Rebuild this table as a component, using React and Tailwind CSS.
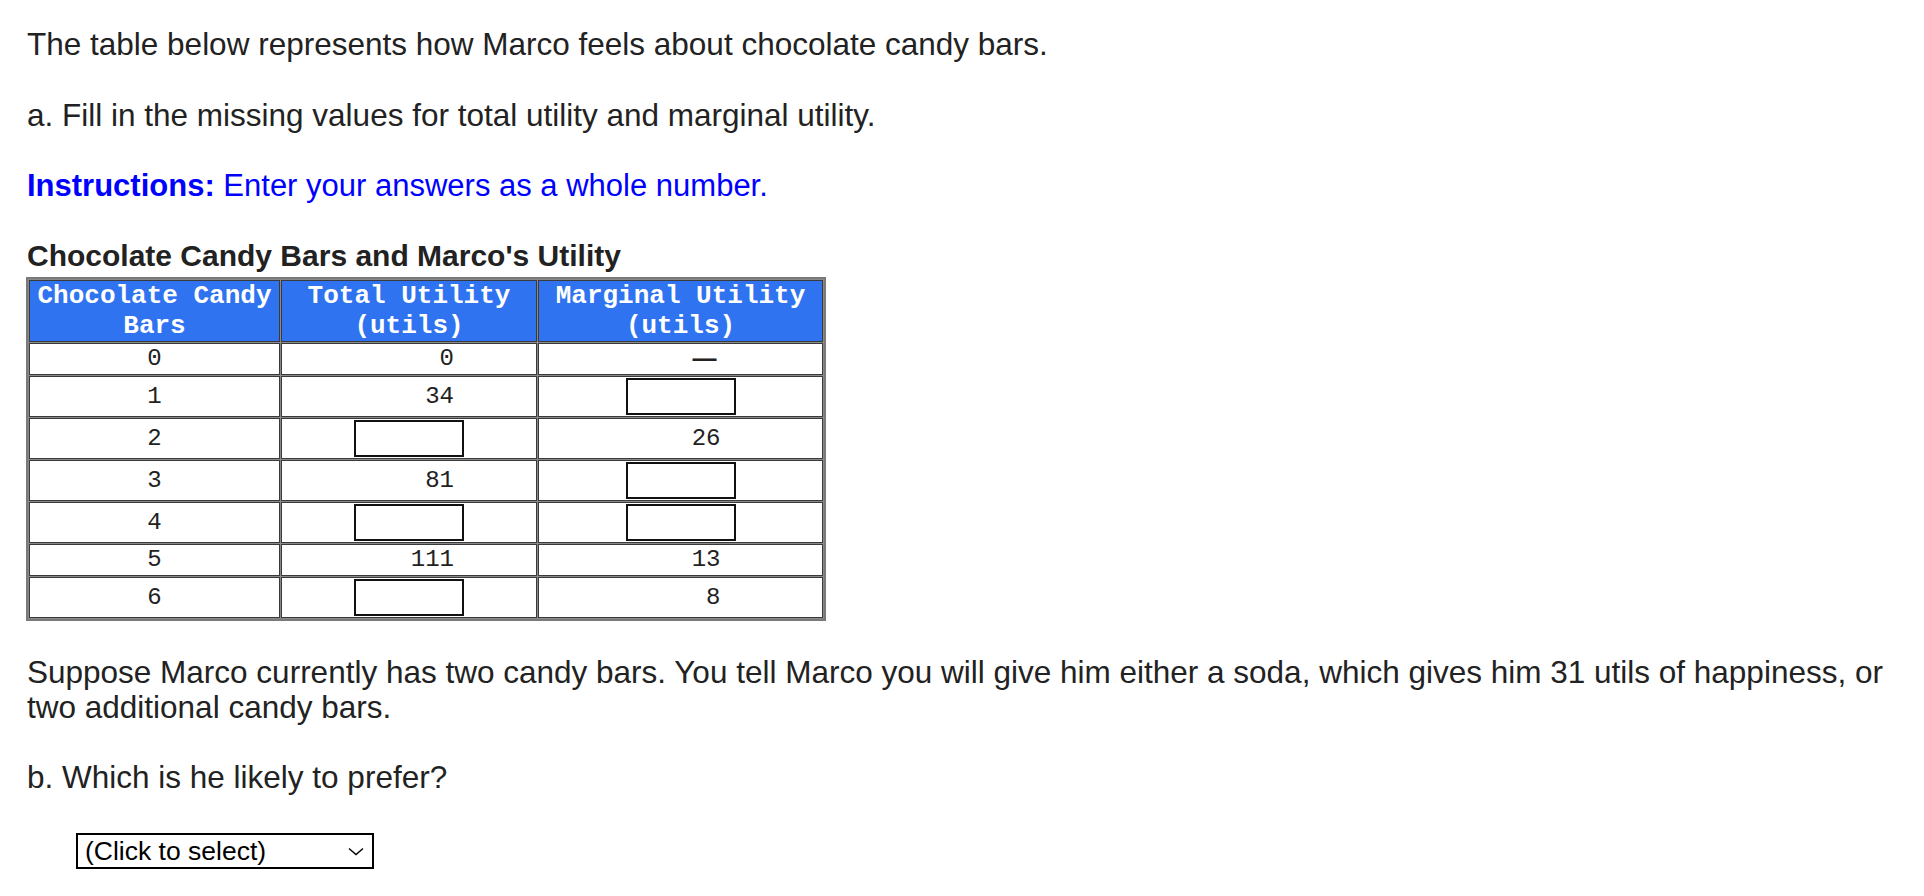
const rows = [
  { q: '0', tu: '0', mu: '—' },
  { q: '1', tu: '34', mu: null },
  { q: '2', tu: null, mu: '26' },
  { q: '3', tu: '81', mu: null },
  { q: '4', tu: null, mu: null },
  { q: '5', tu: '111', mu: '13' },
  { q: '6', tu: null, mu: '8' },
];

function Blank() {
  return <div className="mx-auto h-[37px] w-[110px] border-2 border-[#111] bg-white" />;
}

export default function App() {
  const text = "text-[31.5px] leading-[35px] text-[#222]";
  return (
    <div className="min-h-screen bg-white pl-[27px] pt-[27px] font-['Liberation_Sans',Arial,sans-serif]">
      <p className={text}>The table below represents how Marco feels about chocolate candy bars.</p>
      <p className={`${text} mt-[36px]`}>a. Fill in the missing values for total utility and marginal utility.</p>
      <p className="mt-[35px] text-[31px] leading-[35px] text-[#0000ff]">
        <span className="font-bold">Instructions:</span> Enter your answers as a whole number.
      </p>
      <p className="mt-[35px] text-[30px] leading-[35px] font-bold text-[#222]">Chocolate Candy Bars and Marco's Utility</p>

      <table className="mt-[4px] -ml-px table-fixed border-separate border-spacing-[1px] border-2 border-[#7a7a7a] bg-[#8a8a8a] font-['Liberation_Mono',monospace]">
        <thead>
          <tr>
            {['Chocolate Candy Bars', 'Total Utility (utils)', 'Marginal Utility (utils)'].map((h, i) => (
              <th
                key={h}
                className={`h-[62px] border border-[#3a3a3a] bg-[#2f73f1] p-0 text-center align-middle text-[26px] font-bold leading-[30px] text-white ${
                  i === 0 ? 'w-[251px]' : i === 1 ? 'w-[256px]' : 'w-[285px]'
                }`}
              >
                {h === 'Chocolate Candy Bars' ? (
                  <>Chocolate Candy<br />Bars</>
                ) : h === 'Total Utility (utils)' ? (
                  <>Total Utility<br />(utils)</>
                ) : (
                  <>Marginal Utility<br />(utils)</>
                )}
              </th>
            ))}
          </tr>
        </thead>
        <tbody className="text-[24px] leading-none text-[#222]">
          {rows.map((r) => {
            const tall = r.tu === null || r.mu === null;
            const h = tall ? 'h-[41px]' : 'h-[32px]';
            return (
              <tr key={r.q}>
                <td className={`${h} border border-[#3a3a3a] bg-white p-0 text-center align-middle`}>{r.q}</td>
                <td className={`${h} border border-[#3a3a3a] bg-white p-0 text-center align-middle`}>
                  {r.tu === null ? (
                    <Blank />
                  ) : (
                    <span className="inline-block w-[90px] text-right">{r.tu}</span>
                  )}
                </td>
                <td className={`${h} border border-[#3a3a3a] bg-white p-0 text-center align-middle`}>
                  {r.mu === null ? (
                    <Blank />
                  ) : r.mu === '—' ? (
                    <span className="inline-block w-[80px] pr-[4px] text-right font-['Liberation_Sans',sans-serif] font-bold">—</span>
                  ) : (
                    <span className="inline-block w-[80px] text-right">{r.mu}</span>
                  )}
                </td>
              </tr>
            );
          })}
        </tbody>
      </table>

      <p className={`${text} mt-[34px]`}>
        Suppose Marco currently has two candy bars. You tell Marco you will give him either a soda, which gives him 31 utils of happiness, or
        <br />
        two additional candy bars.
      </p>
      <p className={`${text} mt-[35px]`}>b. Which is he likely to prefer?</p>

      <div className="ml-[49px] mt-[38px] flex h-[36px] w-[298px] items-center justify-between border-2 border-black bg-white pl-[7px] pr-[8px] text-[26.5px] leading-none text-black">
        <span>(Click to select)</span>
        <svg width="16" height="9" viewBox="0 0 16 9" fill="none">
          <path d="M1 1.5 L8 7.5 L15 1.5" stroke="#000" strokeWidth="1.4" />
        </svg>
      </div>
    </div>
  );
}
